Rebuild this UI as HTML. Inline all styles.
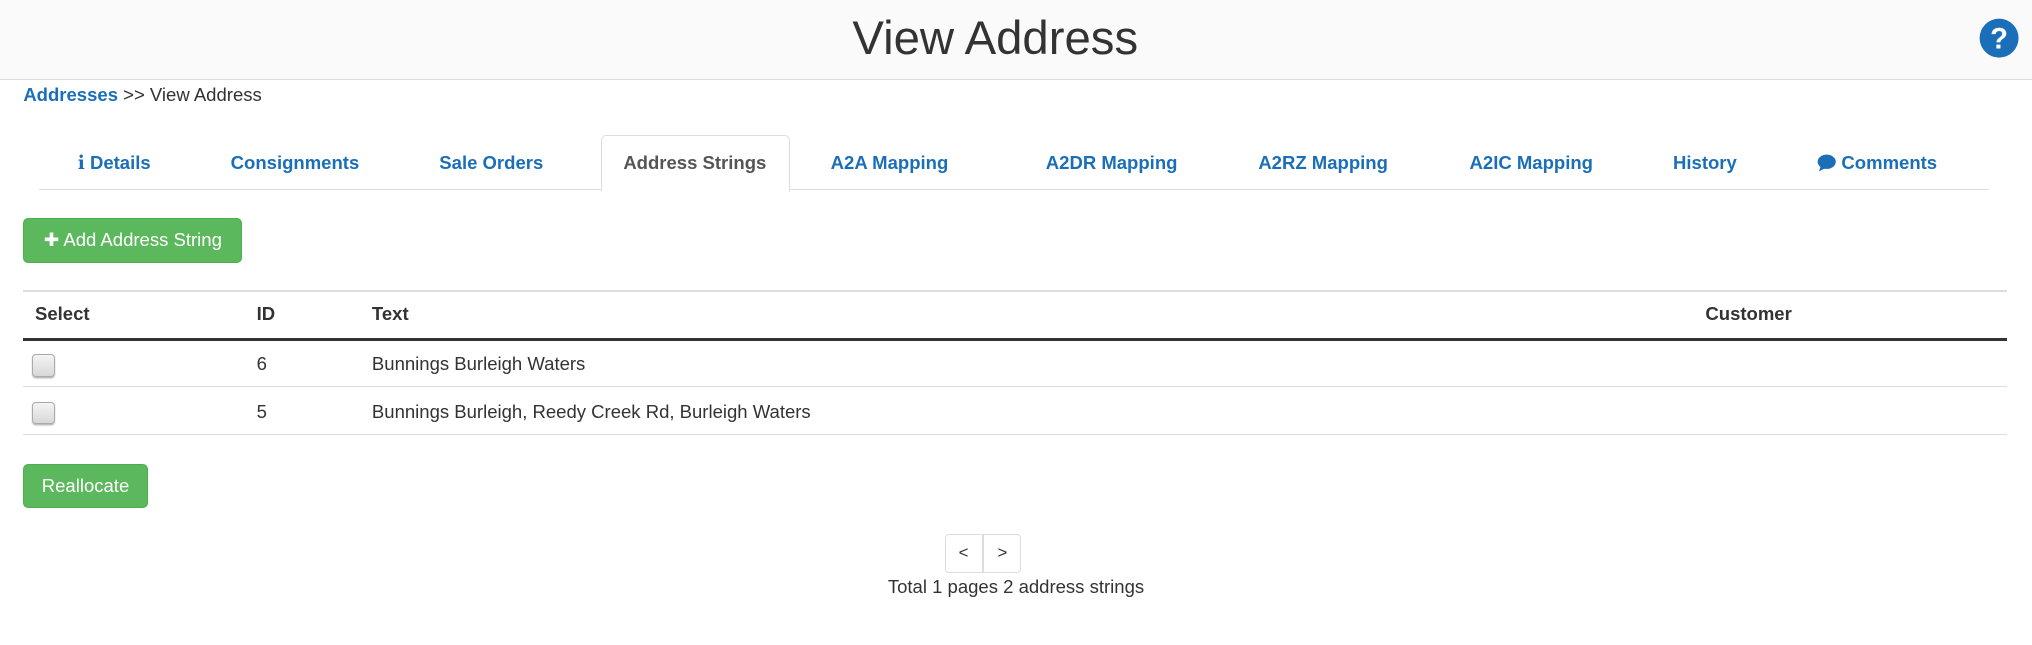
<!DOCTYPE html>
<html><head><meta charset="utf-8"><style>
html,body{margin:0;padding:0;background:#fff;overflow:hidden}
#w{position:relative;width:1568px;height:498px;zoom:1.2959;font-family:"Liberation Sans",Arial,sans-serif;font-size:14.3px;color:#333}
.a{position:absolute;white-space:nowrap}
.hdr{left:0;top:0;width:1568px;height:61px;background:#fafafa;border-bottom:1px solid #ddd}
.t{top:126px;transform:translateY(-50%);font-weight:bold;color:#1a6fb8;font-size:14.3px}
.btn{background:#5cb85c;border:1px solid #4cae4c;border-radius:4px;color:#fff;font-size:14.3px;text-align:center;box-sizing:border-box}
.th{top:242px;transform:translateY(-50%);font-weight:bold;color:#333}
.td{transform:translateY(-50%)}
.cb{width:16px;height:16px;border:1px solid #aaa;border-radius:3px;background:linear-gradient(#f4f4f4,#d8d8d8);box-shadow:0 1px 1px #bbb}
</style></head><body><div id="w">
<div class="a hdr"></div>
<div class="a" style="left:0;width:1536px;top:9px;text-align:center;font-size:36.5px;line-height:42px;color:#333">View Address</div>
<svg class="a" style="left:1527px;top:14px" width="31" height="31" viewBox="0 0 33 33"><circle cx="16.5" cy="16.5" r="16" fill="#1a6fb8"/><text x="16.5" y="25" text-anchor="middle" font-family="Liberation Sans" font-weight="bold" font-size="24" fill="#fff">?</text></svg>
<div class="a" style="left:18px;top:65px"><b style="color:#1a6fb8">Addresses</b> &gt;&gt; View Address</div>
<div class="a" style="left:30px;top:146px;width:1505px;height:1px;background:#ddd"></div>
<div class="a" style="left:464px;top:104px;width:146px;border:1px solid #ddd;border-bottom:1px solid #fff;border-radius:4px 4px 0 0;background:#fff;box-sizing:border-box;height:44px"></div>
<div class="a t" style="left:60px"><span style="font-family:'DejaVu Serif',serif;font-weight:bold">i</span> Details</div>
<div class="a t" style="left:178px">Consignments</div>
<div class="a t" style="left:339px">Sale Orders</div>
<div class="a t" style="left:481px;color:#555">Address Strings</div>
<div class="a t" style="left:641px">A2A Mapping</div>
<div class="a t" style="left:807px">A2DR Mapping</div>
<div class="a t" style="left:971px">A2RZ Mapping</div>
<div class="a t" style="left:1134px">A2IC Mapping</div>
<div class="a t" style="left:1291px">History</div>
<div class="a t" style="left:1402px"><svg width="15" height="14" viewBox="0 0 15 14" style="vertical-align:-2px"><ellipse cx="7.5" cy="6" rx="7" ry="5.5" fill="#1a6fb8"/><path d="M3 9 L1.5 13.5 L7 10.5Z" fill="#1a6fb8"/></svg> Comments</div>
<div class="a btn" style="left:18px;top:168px;width:169px;height:35px;line-height:33px">✚ Add Address String</div>
<div class="a" style="left:18px;top:224px;width:1531px;height:1px;background:#ddd"></div>
<div class="a th" style="left:27px">Select</div>
<div class="a th" style="left:198px">ID</div>
<div class="a th" style="left:287px">Text</div>
<div class="a th" style="left:1316px">Customer</div>
<div class="a" style="left:18px;top:261px;width:1531px;height:2px;background:#333"></div>
<div class="a cb" style="left:25px;top:273px"></div>
<div class="a td" style="left:198px;top:281px">6</div>
<div class="a td" style="left:287px;top:281px">Bunnings Burleigh Waters</div>
<div class="a" style="left:18px;top:298px;width:1531px;height:1px;background:#ddd"></div>
<div class="a cb" style="left:25px;top:310px"></div>
<div class="a td" style="left:198px;top:318px">5</div>
<div class="a td" style="left:287px;top:318px">Bunnings Burleigh, Reedy Creek Rd, Burleigh Waters</div>
<div class="a" style="left:18px;top:335px;width:1531px;height:1px;background:#ddd"></div>
<div class="a btn" style="left:18px;top:358px;width:96px;height:34px;line-height:32px">Reallocate</div>
<div class="a" style="left:729px;top:412px;width:59px;height:30px;border:1px solid #ddd;border-radius:3px;box-sizing:border-box"></div>
<div class="a" style="left:758px;top:412px;width:1px;height:30px;background:#ddd"></div>
<div class="a" style="left:729px;top:412px;width:29px;line-height:30px;text-align:center;font-size:13px">&lt;</div>
<div class="a" style="left:759px;top:412px;width:29px;line-height:30px;text-align:center;font-size:13px">&gt;</div>
<div class="a td" style="left:0;width:1568px;text-align:center;top:453px">Total 1 pages 2 address strings</div>
</div></body></html>
